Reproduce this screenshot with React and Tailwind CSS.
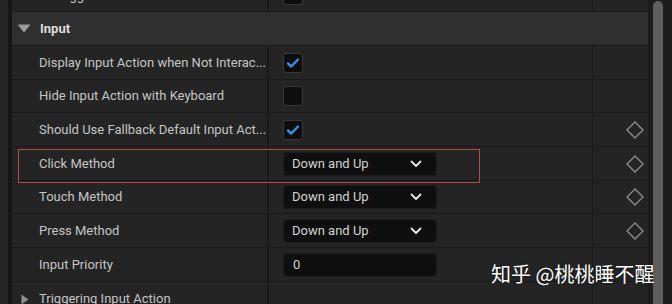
import React from "react";

const rows = [
  { label: "Display Input Action when Not Interac...", kind: "check", checked: true, h: "h-[34px]" },
  { label: "Hide Input Action with Keyboard", kind: "check", checked: false, h: "h-[33px]" },
  { label: "Should Use Fallback Default Input Act...", kind: "check", checked: true, reset: true, h: "h-[34px]" },
  { label: "Click Method", kind: "combo", value: "Down and Up", reset: true, highlight: true, h: "h-[34px]" },
  { label: "Touch Method", kind: "combo", value: "Down and Up", reset: true, h: "h-[33px]" },
  { label: "Press Method", kind: "combo", value: "Down and Up", reset: true, h: "h-[34px]" },
  { label: "Input Priority", kind: "number", value: "0", h: "h-[34px]" },
];

function CheckBox({ checked }) {
  return (
    <div className="w-[20px] h-[20px] rounded-[3px] bg-[#0e0e0e] border border-[#383838] flex items-center justify-center">
      {checked && (
        <svg width="14" height="12" viewBox="0 0 14 12">
          <path d="M2 6.5 L5.3 9.5 L12 2.5" fill="none" stroke="#3a8ee6" strokeWidth="2.4" strokeLinecap="round" strokeLinejoin="round" />
        </svg>
      )}
    </div>
  );
}

function Combo({ value }) {
  return (
    <div className="w-[154px] h-[24px] rounded-[4px] bg-[#0f0f0f] border border-[#1c1c1c] flex items-center justify-between pl-[8px] pr-[14px]">
      <span className="text-[13px] text-[#d2d2d2]">{value}</span>
      <svg width="12" height="8" viewBox="0 0 12 8">
        <path d="M1.5 1.5 L6 6 L10.5 1.5" fill="none" stroke="#e6e6e6" strokeWidth="1.8" strokeLinecap="round" strokeLinejoin="round" />
      </svg>
    </div>
  );
}

function NumberBox({ value }) {
  return (
    <div className="w-[154px] h-[24px] rounded-[4px] bg-[#0f0f0f] border border-[#1c1c1c] flex items-center pl-[9px]">
      <span className="text-[13px] text-[#d2d2d2]">{value}</span>
    </div>
  );
}

function Diamond() {
  return (
    <svg width="20" height="20" viewBox="0 0 20 20">
      <path d="M10 2 L18 10 L10 18 L2 10 Z" fill="none" stroke="#8c8c8c" strokeWidth="1.4" />
    </svg>
  );
}

function PropRow({ row }) {
  return (
    <div className={`relative flex shrink-0 ${row.h} border-b border-[#1a1a1a] bg-[#242424]`}>
      <div className="w-[255px] flex items-center pl-[27px] text-[13px] text-[#c4c4c4] whitespace-nowrap overflow-hidden">
        {row.label}
      </div>
      <div className="w-[2px] bg-[#1b1b1b]" />
      <div className="w-[323px] flex items-center pl-[14px]">
        {row.kind === "check" && <CheckBox checked={row.checked} />}
        {row.kind === "combo" && <Combo value={row.value} />}
        {row.kind === "number" && <NumberBox value={row.value} />}
      </div>
      <div className="w-[1px] bg-[#1b1b1b]" />
      <div className="flex-1 flex items-center justify-end pr-[3px]">
        {row.reset && <Diamond />}
      </div>
      {row.highlight && (
        <div className="absolute z-10 left-[6px] top-[2px] w-[462px] h-[34px] border border-[#b5484a] pointer-events-none" />
      )}
    </div>
  );
}

export default function App() {
  return (
    <div className="relative w-[672px] h-[304px] overflow-hidden bg-[#242424] flex" style={{ fontFamily: "Roboto, 'Liberation Sans', sans-serif" }}>
      {/* left gutter */}
      <div className="w-[8px] bg-[#262626]" />
      <div className="w-[4px] bg-[#161616]" />

      {/* property grid */}
      <div className="w-[636px] flex flex-col">
        {/* partial row on top */}
        <div className="relative flex shrink-0 h-[12px] border-b border-[#181818] bg-[#242424] overflow-hidden">
          <div className="w-[255px] pl-[43px] text-[13px] text-[#c4c4c4] leading-none -mt-[11px] whitespace-nowrap">
            Toggle
          </div>
          <div className="w-[2px] bg-[#1b1b1b]" />
          <div className="w-[323px] pl-[14px]">
            <div className="w-[20px] h-[6px] -mt-[1px] rounded-b-[3px] bg-[#0e0e0e] border border-t-0 border-[#383838]" />
          </div>
          <div className="w-[1px] bg-[#1b1b1b]" />
        </div>

        {/* category header */}
        <div className="flex shrink-0 items-center h-[34px] bg-[#2f2f2f] border-b border-[#1a1a1a] pl-[4px]">
          <svg width="14" height="9" viewBox="0 0 14 9" className="ml-[1px]">
            <path d="M0.5 0.5 L13.5 0.5 L7 8.5 Z" fill="#9c9c9c" />
          </svg>
          <span className="ml-[9px] text-[13px] font-bold text-[#dcdcdc]">Input</span>
        </div>

        {rows.map((row) => (
          <PropRow key={row.label} row={row} />
        ))}

        {/* collapsed sub category */}
        <div className="flex shrink-0 h-[34px] bg-[#242424]">
          <div className="w-[255px] flex items-center pl-[9px] text-[13px] text-[#c4c4c4] whitespace-nowrap">
            <svg width="8" height="11" viewBox="0 0 8 11">
              <path d="M0.5 0.5 L7.5 5.5 L0.5 10.5 Z" fill="#8e8e8e" />
            </svg>
            <span className="ml-[10px]">Triggering Input Action</span>
          </div>
          <div className="w-[2px] bg-[#1b1b1b]" />
          <div className="w-[323px]" />
          <div className="w-[1px] bg-[#1b1b1b]" />
        </div>
      </div>

      {/* scrollbar */}
      <div className="flex-1 flex bg-[#1d1d1d]">
        <div className="w-[5px]" />
        <div className="w-[10px] h-full bg-[#5e5e5e] rounded-t-[5px] mt-[1px]" />
      </div>

      {/* watermark */}
      <div
        className="absolute z-20 left-[491px] top-[259px] text-[20px] text-white whitespace-nowrap [text-shadow:0_0_2px_rgba(0,0,0,0.6)]"
        style={{ fontFamily: "'Noto Sans CJK SC', sans-serif" }}
      >
        知乎 @桃桃睡不醒
      </div>
    </div>
  );
}
